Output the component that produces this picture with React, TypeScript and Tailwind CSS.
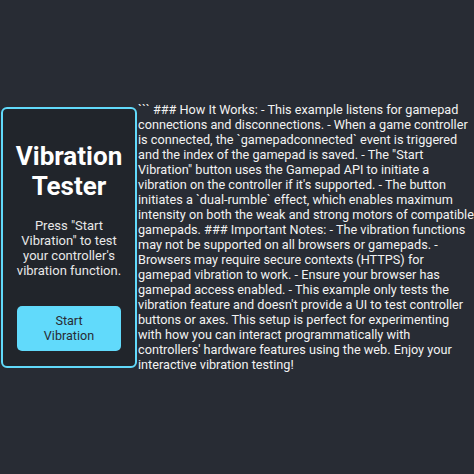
export default function App() {
  const text =
    "``` ### How It Works: - This example listens for gamepad connections and disconnections. - When a game controller is connected, the `gamepadconnected` event is triggered and the index of the gamepad is saved. - The \"Start Vibration\" button uses the Gamepad API to initiate a vibration on the controller if it's supported. - The button initiates a `dual-rumble` effect, which enables maximum intensity on both the weak and strong motors of compatible gamepads. ### Important Notes: - The vibration functions may not be supported on all browsers or gamepads. - Browsers may require secure contexts (HTTPS) for gamepad vibration to work. - Ensure your browser has gamepad access enabled. - This example only tests the vibration feature and doesn't provide a UI to test controller buttons or axes. This setup is perfect for experimenting with how you can interact programmatically with controllers' hardware features using the web. Enjoy your interactive vibration testing!";
  return (
    <div className="min-h-screen w-full bg-[#282c34] flex items-center font-['Roboto',sans-serif] text-white">
      <div className="ml-[1px] w-[136px] shrink-0 rounded-[6px] border-2 border-[#61dafb] bg-[#21252b] px-[12px] pt-[32px] pb-[15px] text-center">
        <h1 className="text-[26px] font-bold leading-[30px]">Vibration Tester</h1>
        <p className="mt-[17px] text-[13px] leading-[15px] text-[#e8e8e8]">
          Press "Start Vibration" to test your controller's vibration function.
        </p>
        <button className="mx-auto mt-[28px] block h-[45px] w-[104px] rounded-[5px] bg-[#61dafb] px-[14px] text-[12.6px] leading-[15px] text-[#282c34]">
          Start Vibration
        </button>
      </div>
      <div className="min-w-0 flex-1 pl-[1px] text-[12.7px] leading-[15px] text-[#f2f2f2]">{text}</div>
    </div>
  );
}
